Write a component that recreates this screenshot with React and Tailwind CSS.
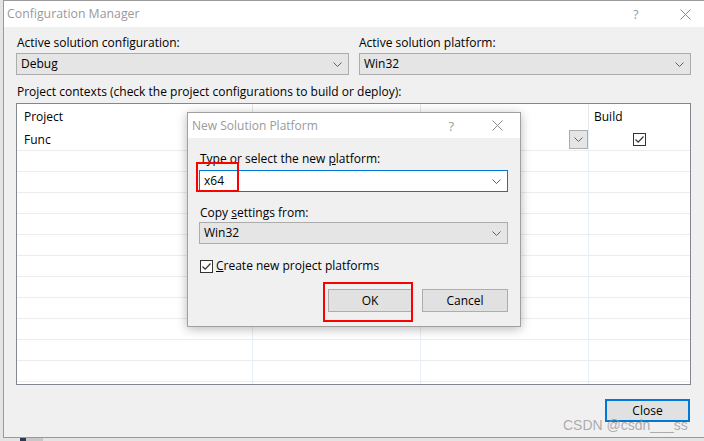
import React from "react";

function Chevron({ color = "#606060" }) {
  return (
    <svg width="9" height="5" viewBox="0 0 9 5" className="shrink-0">
      <path d="M0.5 0.5 L4.5 4.5 L8.5 0.5" fill="none" stroke={color} strokeWidth="1" />
    </svg>
  );
}

function CheckBox() {
  return (
    <div className="w-[13px] h-[13px] border border-[#333] bg-white flex items-center justify-center shrink-0">
      <svg width="11" height="11" viewBox="0 0 11 11">
        <path d="M1.5 5.5 L4.2 8.2 L9.5 2.5" fill="none" stroke="#333" strokeWidth="1.2" />
      </svg>
    </div>
  );
}

function CloseX({ color = "#777" }) {
  return (
    <svg width="11" height="11" viewBox="0 0 11 11">
      <path d="M0.5 0.5 L10.5 10.5 M10.5 0.5 L0.5 10.5" fill="none" stroke={color} strokeWidth="1" />
    </svg>
  );
}

function Combo({ text, className = "" }) {
  return (
    <div className={"h-[22px] border border-[#acacac] bg-[#e5e5e5] flex items-center justify-between pl-[4px] pr-[6px] " + className}>
      <span>{text}</span>
      <Chevron />
    </div>
  );
}

export default function App() {
  const rows = Array.from({ length: 11 });
  return (
    <div className="w-[704px] h-[441px] relative overflow-hidden bg-[#e4e4e4] text-[12px] leading-[16px] text-black font-['Segoe_UI','Open_Sans',sans-serif]">
      {/* main window */}
      <div className="ml-[3px] mt-0 w-[720px] h-[438px] border-l border-t border-b border-[#9a9a9a] bg-[#f0f0f0] flex flex-col">
        <div className="h-[26px] bg-white flex items-center pl-[3px] shrink-0">
          <span className="text-[12.3px] text-[#9a9a9a] w-[626px]">Configuration Manager</span>
          <span className="text-[13px] text-[#9a9a9a] w-[47px]">?</span>
          <CloseX color="#8a8a8a" />
        </div>
        <div className="pl-[12px] pt-[8px] w-[687px] flex flex-col">
          <div className="flex gap-[10px]">
            <div className="w-[333px] flex flex-col">
              <span className="pl-[1px]">Active solution configuration:</span>
              <Combo text="Debug" className="mt-[2px]" />
            </div>
            <div className="w-[332px] flex flex-col">
              <span>Active solution platform:</span>
              <Combo text="Win32" className="mt-[2px]" />
            </div>
          </div>
          <span className="mt-[9px] pl-[1px]">Project contexts (check the project configurations to build or deploy):</span>
          <div className="mt-[3px] w-[675px] h-[282px] border border-[#828790] bg-white flex flex-col">
            {/* header */}
            <div className="h-[25px] flex shrink-0">
              <div className="w-[236px] pl-[7px] flex items-center border-r border-[#e6e6e6]">Project</div>
              <div className="w-[168px] border-r border-[#e6e6e6]" />
              <div className="w-[168px] border-r border-[#e6e6e6]" />
              <div className="flex-1 pl-[5px] flex items-center">Build</div>
            </div>
            {/* Func row */}
            <div className="h-[22px] flex border-b border-[#ececec] shrink-0">
              <div className="w-[236px] pl-[7px] flex items-center border-r border-[#e8eef8]">Func</div>
              <div className="w-[168px] border-r border-[#e8eef8]" />
              <div className="w-[168px] flex items-center justify-end border-r border-[#e8eef8]">
                <div className="w-[19px] h-[19px] border border-[#acacac] bg-[#e5e5e5] flex items-center justify-center"><Chevron /></div>
              </div>
              <div className="flex-1 flex items-center justify-center pr-[1px]">
                <CheckBox />
              </div>
            </div>
            {rows.map((_, i) => (
              <div key={i} className="h-[21px] flex border-b border-[#ececec] shrink-0">
                <div className="w-[236px] border-r border-[#e8eef8]" />
                <div className="w-[168px] border-r border-[#e8eef8]" />
                <div className="w-[168px] border-r border-[#e8eef8]" />
                <div className="flex-1" />
              </div>
            ))}
            <div className="flex flex-1">
              <div className="w-[236px] border-r border-[#e8eef8]" />
              <div className="w-[168px] border-r border-[#e8eef8]" />
              <div className="w-[168px] border-r border-[#e8eef8]" />
              <div className="flex-1" />
            </div>
          </div>
          <div className="flex justify-end w-[675px] mt-[14px]">
            <button className="w-[85px] h-[23px] border-2 border-[#0078d7] bg-[#e1e1e1] flex items-center justify-center mr-[1px]">Close</button>
          </div>
        </div>
      </div>

      {/* under-window stub */}
      <div className="absolute left-[20px] top-[438px] w-[6px] h-[3px] bg-[#2b3a55]" />
      <div className="absolute left-[26px] top-[438px] w-[17px] h-[3px] bg-[#c8c8c8]" />

      {/* New Solution Platform dialog */}
      <div className="absolute left-[187px] top-[112px] w-[334px] h-[215px] border border-[#a0a0a0] bg-[#f0f0f0] shadow-[0_2px_10px_rgba(0,0,0,0.28)] flex flex-col">
        <div className="h-[25px] bg-white flex items-center pl-[4px] shrink-0">
          <span className="text-[12px] text-[#9a9a9a] flex-1">New Solution Platform</span>
          <span className="text-[13px] text-[#9a9a9a] mr-[38px]">?</span>
          <div className="mr-[17px]"><CloseX color="#8a8a8a" /></div>
        </div>
        <div className="pl-[11px] pr-[12px] pt-[13px] flex flex-col">
          <span className="pl-[1px]">Type or select the new <span className="underline">p</span>latform:</span>
          <div className="mt-[3px] h-[22px] border border-[#0078d7] bg-white flex items-center justify-between pl-[4px] pr-[6px]">
            <span>x64</span>
            <Chevron />
          </div>
          <span className="mt-[13px] pl-[1px]">Copy <span className="underline">s</span>ettings from:</span>
          <Combo text="Win32" className="mt-[1px]" />
          <div className="mt-[14px] flex items-center gap-[3px] pl-[1px]">
            <CheckBox />
            <span><span className="underline">C</span>reate new project platforms</span>
          </div>
          <div className="mt-[15px] flex justify-end gap-[10px]">
            <button className="w-[84px] h-[23px] border border-[#adadad] bg-[#e1e1e1] flex items-center justify-center">OK</button>
            <button className="w-[86px] h-[23px] border border-[#adadad] bg-[#e1e1e1] flex items-center justify-center">Cancel</button>
          </div>
        </div>
      </div>

      {/* red highlight boxes */}
      <div className="absolute left-[196px] top-[162px] w-[43px] h-[30px] border-2 border-[#ff0000]" />
      <div className="absolute left-[323px] top-[282px] w-[90px] h-[40px] border-2 border-[#ff0000]" />

      {/* watermark */}
      <div className="absolute left-[563px] top-[417px] text-[14px] leading-[17px] text-[#9a9a9a]/80 font-['Liberation_Sans',sans-serif]">CSDN @csdn___ss</div>
    </div>
  );
}
